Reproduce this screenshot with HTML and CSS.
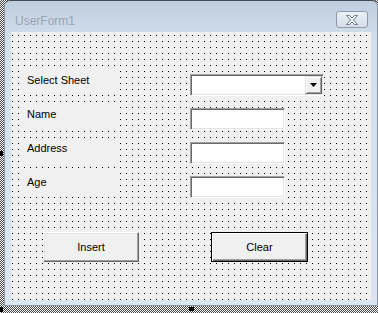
FILE: index.html
```html
<!DOCTYPE html>
<html lang="en">
  <head>
    <meta charset="UTF-8" />
    <title>UserForm1</title>
    <link rel="stylesheet" href="styles.css">
  </head>
  <body>
    <div class="window">
      <div class="titlebar">
        <span class="title">UserForm1</span>
        <span class="close">
          <svg width="14" height="10" viewBox="0 0 14 10">
            <path d="M1.5 0.5h3l2.5 2.5 2.5-2.5h3l-4 4.5 4 4.5h-3l-2.5-2.5-2.5 2.5h-3l4-4.5z" fill="#eef1f5" stroke="#6f7c8a" stroke-width="1" />
          </svg>
        </span>
      </div>
      <div class="client">
        <div class="form-grid">
          <div class="label">Select Sheet</div>
          <div class="field">
            <div class="combo">
              <span class="drop">
                <svg width="7" height="4" viewBox="0 0 7 4"><path d="M0 0h7l-3.5 4z" fill="#000" /></svg>
              </span>
            </div>
          </div>
          <div class="label">Name</div>
          <div class="field"><div class="textbox"></div></div>
          <div class="label">Address</div>
          <div class="field"><div class="textbox"></div></div>
          <div class="label">Age</div>
          <div class="field"><div class="textbox"></div></div>
        </div>
        <div class="buttons">
          <button class="btn">Insert</button>
          <button class="btn default">Clear</button>
        </div>
      </div>
    </div>
    <span class="handle handle-left"></span>
    <span class="handle handle-bottom"></span>
    <span class="handle handle-corner"></span>
  </body>
</html>
```

FILE: styles.css
```css
body {
  margin: 0;
  width: 378px;
  height: 313px;
  overflow: hidden;
  position: relative;
  font-family: "Liberation Sans", Arial, sans-serif;
  font-size: 11px;
  background: repeating-conic-gradient(#4a4a4a 0 25%, #f6f6f6 0 50%) 0 0 / 2px 2px;
}
.window {
  box-sizing: border-box;
  margin-left: 4px;
  width: 374px;
  height: 306px;
  border: 1px solid #8a95a2;
  border-top-color: #434a53;
  border-radius: 6px 6px 0 0;
  padding: 0 6px 5px 6px;
  background: linear-gradient(#bfcedf, #d3dfec 40px, #dae5f1);
}
.titlebar {
  display: flex;
  align-items: flex-start;
  height: 31px;
}
.title {
  margin: 13px 0 0 4px;
  font-size: 12px;
  line-height: 14px;
  color: #99a4b1;
}
.close {
  margin: 10px 3px 0 auto;
  box-sizing: border-box;
  width: 32px;
  height: 17px;
  border: 1px solid #8e9bab;
  border-radius: 3px;
  background: linear-gradient(#eef2f7, #d4dde8);
  display: flex;
  align-items: center;
  justify-content: center;
}
.client {
  height: 268px;
  background-color: #f0f0f0;
  background-image: linear-gradient(to right, #f0f0f0 5px, transparent 5px),
    linear-gradient(to bottom, #f0f0f0 5px, #000 5px);
  background-size: 6px 6px;
  background-position: 2px 4px;
}
.form-grid {
  display: grid;
  grid-template-columns: 98px 1fr;
  grid-auto-rows: 34px;
  column-gap: 70px;
  padding: 38px 0 0 11px;
}
.label {
  height: 25px;
  padding: 4px 0 0 5px;
  box-sizing: border-box;
  line-height: 13px;
  background: #f0f0f0;
  color: #000;
}
.field {
  padding-top: 4px;
}
.textbox,
.combo {
  box-sizing: border-box;
  height: 22px;
  background: #fff;
  border: 1px solid;
  border-color: #a0a0a0 #fff #fff #a0a0a0;
  box-shadow: inset 1px 1px #696969, inset -1px -1px #e3e3e3;
}
.textbox {
  width: 95px;
}
.combo {
  width: 134px;
  display: flex;
  justify-content: flex-end;
  padding: 1px;
}
.drop {
  box-sizing: border-box;
  width: 17px;
  height: 18px;
  background: #f0f0f0;
  border: 1px solid;
  border-color: #e3e3e3 #696969 #696969 #e3e3e3;
  box-shadow: inset 1px 1px #fff, inset -1px -1px #a0a0a0;
  display: flex;
  align-items: center;
  justify-content: center;
}
.buttons {
  display: flex;
  gap: 72px;
  margin-top: 26px;
  padding-left: 32px;
}
.btn {
  box-sizing: border-box;
  width: 96px;
  height: 30px;
  padding: 0;
  font-family: "Liberation Sans", Arial, sans-serif;
  font-size: 11px;
  color: #000;
  background: #f0f0f0;
  border: 1px solid;
  border-color: #fff #696969 #696969 #fff;
  box-shadow: inset -1px -1px #a0a0a0, inset 1px 1px #e3e3e3;
}
.btn.default {
  width: 97px;
  border-color: #000;
  box-shadow: inset 1px 1px #fff, inset -1px -1px #696969, inset -2px -2px #a0a0a0;
}
.handle {
  position: absolute;
  background: #000;
}
.handle-left {
  left: 0;
  top: 151px;
  width: 3px;
  height: 5px;
}
.handle-bottom {
  left: 189px;
  top: 307px;
  width: 5px;
  height: 4px;
}
.handle-corner {
  left: 0;
  top: 307px;
  width: 3px;
  height: 5px;
}
```
